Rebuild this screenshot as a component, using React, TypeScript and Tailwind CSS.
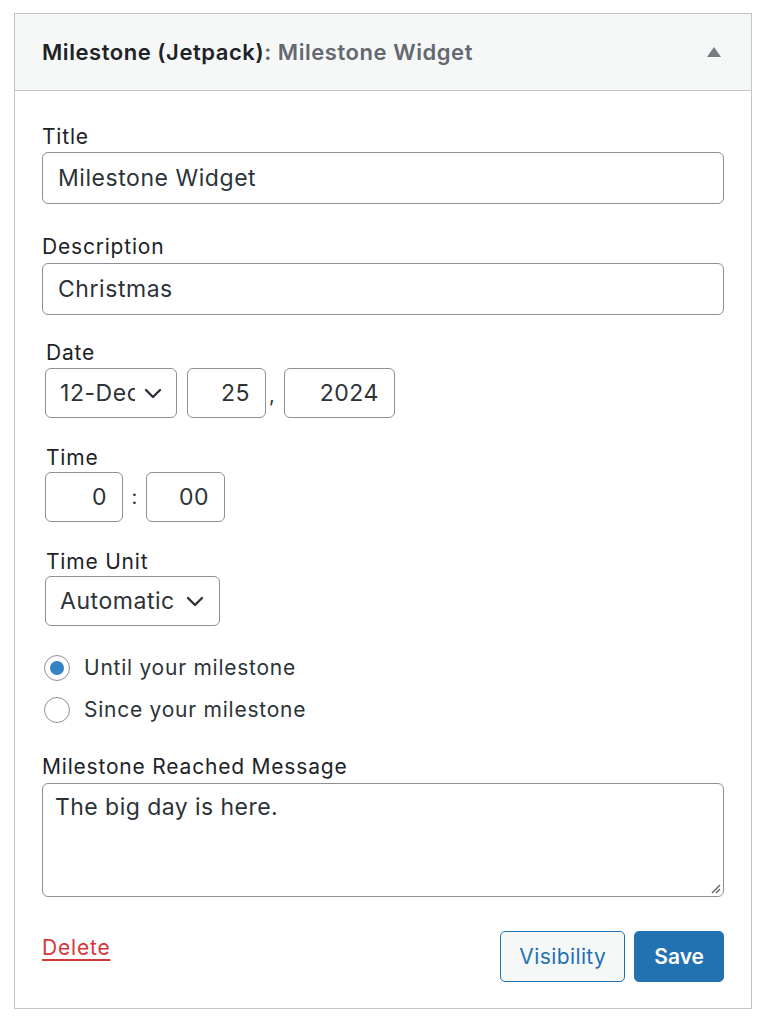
const font = { fontFamily: "Inter, 'Noto Sans', sans-serif" };

const Chevron = () => (
  <svg width="18" height="11" viewBox="0 0 18 11" className="shrink-0">
    <path d="M2 2 L9 9 L16 2" fill="none" stroke="#2c3338" strokeWidth="2.4" strokeLinecap="round" strokeLinejoin="round" />
  </svg>
);

const Label = ({ children, indent = false }: { children: React.ReactNode; indent?: boolean }) => (
  <div className={`text-[21px] leading-[26px] tracking-[0.8px] text-[#1d2327] ${indent ? "pl-[4px]" : ""}`}>{children}</div>
);

const Box = ({ className = "", children }: { className?: string; children?: React.ReactNode }) => (
  <div className={`border border-[#8c8f94] rounded-[6px] bg-white text-[23px] tracking-[0.55px] text-[#2c3338] flex items-center ${className}`}>
    {children}
  </div>
);

const Radio = ({ checked, label }: { checked?: boolean; label: string }) => (
  <div className="h-[42px] flex items-center">
    <span className="w-[26px] h-[26px] rounded-full border border-[#8c8f94] bg-white flex items-center justify-center">
      {checked && <span className="w-[14px] h-[14px] rounded-full bg-[#3582c4]" />}
    </span>
    <span className="ml-[14px] text-[21px] tracking-[0.75px] text-[#2c3338]">{label}</span>
  </div>
);

export default function App() {
  return (
    <div className="min-h-screen bg-white pt-[13px] pl-[14px]" style={font}>
      <div className="w-[738px] border border-[#c3c4c7] bg-white">
        {/* widget header */}
        <div className="h-[77px] bg-[#f6f7f7] border-b border-[#c3c4c7] px-[27px] flex items-center justify-between">
          <div className="text-[22px] tracking-[0.55px] font-semibold text-[#1d2327]">
            Milestone (Jetpack)<span className="text-[#646970]">: Milestone Widget</span>
          </div>
          <svg width="14" height="10" viewBox="0 0 14 10" className="mr-[3px]">
            <path d="M7 0 L14 10 L0 10 Z" fill="#787c82" />
          </svg>
        </div>

        {/* widget form */}
        <div className="px-[27px] pt-[33px] pb-[26px]">
          <Label>Title</Label>
          <Box className="mt-[2px] h-[52px] px-[15px]">Milestone Widget</Box>

          <div className="mt-[30px]">
            <Label>Description</Label>
            <Box className="mt-[3px] h-[52px] px-[15px]">Christmas</Box>
          </div>

          <div className="mt-[25px]">
            <Label indent>Date</Label>
            <div className="mt-[2px] ml-[3px] flex items-end">
              <Box className="w-[132px] h-[50px] pl-[14px] overflow-hidden">
                <span className="w-[75px] overflow-hidden whitespace-nowrap">12-Dec</span>
                <span className="ml-[9px] flex"><Chevron /></span>
              </Box>
              <Box className="ml-[10px] w-[79px] h-[50px] justify-end pr-[15px]">25</Box>
              <span className="w-[18px] pl-[3px] text-[20px] text-[#2c3338] mb-[8px]">,</span>
              <Box className="w-[111px] h-[50px] justify-end pr-[15px]">2024</Box>
            </div>
          </div>

          <div className="mt-[27px]">
            <Label indent>Time</Label>
            <div className="mt-[1px] ml-[3px] flex items-center">
              <Box className="w-[78px] h-[50px] justify-end pr-[15px]">0</Box>
              <span className="w-[23px] text-center text-[20px] text-[#2c3338]">:</span>
              <Box className="w-[79px] h-[50px] justify-end pr-[15px]">00</Box>
            </div>
          </div>

          <div className="mt-[27px]">
            <Label indent>Time Unit</Label>
            <div className="mt-[1px] ml-[3px] flex">
              <Box className="w-[175px] h-[50px] pl-[14px]">
                <span>Automatic</span>
                <span className="ml-[11px] flex"><Chevron /></span>
              </Box>
            </div>
          </div>

          <div className="mt-[21px] ml-[2px]">
            <Radio checked label="Until your milestone" />
            <Radio label="Since your milestone" />
          </div>

          <div className="mt-[23px]">
            <Label>Milestone Reached Message</Label>
            <div className="relative mt-[3px] h-[114px] border border-[#8c8f94] rounded-[6px] bg-white px-[12px] pt-[6px] text-[23px] tracking-[0.45px] text-[#2c3338]">
              The big day is here.
              <svg width="12" height="12" viewBox="0 0 12 12" className="absolute right-[2px] bottom-[2px]">
                <path d="M11 3 L3 11 M11 7 L7 11" stroke="#646970" strokeWidth="1.5" />
              </svg>
            </div>
          </div>

          <div className="mt-[34px] flex items-start justify-between">
            <a className="mt-[1px] text-[21px] tracking-[0.8px] text-[#d63638] underline underline-offset-[4px]">Delete</a>
            <div className="flex gap-[9px]">
              <button className="h-[51px] px-[18px] rounded-[5px] border border-[#2271b1] bg-[#f6f7f7] text-[21px] tracking-[0.4px] text-[#2271b1]">
                Visibility
              </button>
              <button className="h-[51px] px-[19px] rounded-[5px] border border-[#2271b1] bg-[#2271b1] text-[21px] font-semibold text-white">
                Save
              </button>
            </div>
          </div>
        </div>
      </div>
    </div>
  );
}
